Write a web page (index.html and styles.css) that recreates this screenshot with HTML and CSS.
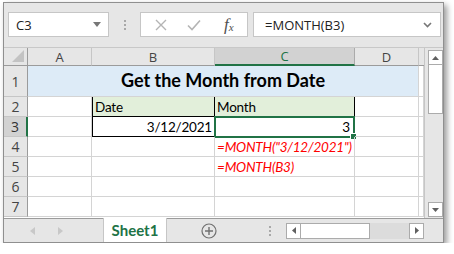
FILE: index.html
```html
<!DOCTYPE html>
<html lang="en">
<head>
    <meta charset="UTF-8">
    <title>Get the Month from Date</title>
    <link rel="stylesheet" href="styles.css">
</head>
<body>
    <div class="window">
        <!-- Formula bar -->
        <div class="formula-bar">
            <div class="name-box">
                <span>C3</span>
                <svg class="caret" width="8" height="5" viewBox="0 0 8 5"><path d="M0 0H8L4 5Z" fill="#777"/></svg>
            </div>
            <div class="grip"><i></i><i></i><i></i></div>
            <div class="fx-box">
                <svg width="12" height="12" viewBox="0 0 12 12"><path d="M1 1L11 11M11 1L1 11" stroke="#b4b4b4" stroke-width="1.4"/></svg>
                <svg width="14" height="12" viewBox="0 0 14 12"><path d="M1 6.5L5 10.5L13 1.5" stroke="#b4b4b4" stroke-width="1.6" fill="none"/></svg>
                <span class="fx">f<sub>x</sub></span>
            </div>
            <div class="formula-input">
                <span>=MONTH(B3)</span>
                <svg width="9" height="6" viewBox="0 0 9 6"><path d="M1 1L4.5 4.5L8 1" stroke="#777" stroke-width="1.6" fill="none"/></svg>
            </div>
        </div>

        <!-- Sheet -->
        <div class="sheet">
            <div class="grid">
                <div class="hd corner"></div>
                <div class="hd col">A</div>
                <div class="hd col">B</div>
                <div class="hd col active">C</div>
                <div class="hd col">D</div>
                <div class="hd col blank"></div>

                <div class="hd row">1</div>
                <div class="cell title">Get the Month from Date</div>
                <div class="cell"></div>

                <div class="hd row">2</div>
                <div class="cell"></div>
                <div class="cell head b-left">Date</div>
                <div class="cell head">Month</div>
                <div class="cell"></div>
                <div class="cell"></div>

                <div class="hd row active">3</div>
                <div class="cell"></div>
                <div class="cell num b-left b-bottom">3/12/2021</div>
                <div class="cell num b-bottom selected">3<span class="handle"></span></div>
                <div class="cell"></div>
                <div class="cell"></div>

                <div class="hd row">4</div>
                <div class="cell"></div>
                <div class="cell"></div>
                <div class="cell formula">=MONTH("3/12/2021")</div>
                <div class="cell"></div>
                <div class="cell"></div>

                <div class="hd row">5</div>
                <div class="cell"></div>
                <div class="cell"></div>
                <div class="cell formula">=MONTH(B3)</div>
                <div class="cell"></div>
                <div class="cell"></div>

                <div class="hd row">6</div>
                <div class="cell"></div>
                <div class="cell"></div>
                <div class="cell"></div>
                <div class="cell"></div>
                <div class="cell"></div>

                <div class="hd row">7</div>
                <div class="cell"></div>
                <div class="cell"></div>
                <div class="cell"></div>
                <div class="cell"></div>
                <div class="cell"></div>
            </div>

            <div class="vscroll">
                <div class="sb-btn"><svg width="7" height="4" viewBox="0 0 7 4"><path d="M0 4H7L3.5 0Z" fill="#606060"/></svg></div>
                <div class="v-thumb"></div>
                <div class="v-track"></div>
                <div class="sb-btn"><svg width="7" height="4" viewBox="0 0 7 4"><path d="M0 0H7L3.5 4Z" fill="#606060"/></svg></div>
            </div>
        </div>

        <!-- Sheet tabs -->
        <div class="tabbar">
            <div class="tab-nav">
                <svg width="5" height="8" viewBox="0 0 5 8"><path d="M5 0V8L0 4Z" fill="#c8c8c8"/></svg>
                <svg width="5" height="8" viewBox="0 0 5 8"><path d="M0 0V8L5 4Z" fill="#c8c8c8"/></svg>
            </div>
            <div class="tab">Sheet1</div>
            <div class="add-sheet">
                <svg width="16" height="16" viewBox="0 0 16 16"><circle cx="8" cy="8" r="7" fill="none" stroke="#707070" stroke-width="1.2"/><path d="M8 4V12M4 8H12" stroke="#707070" stroke-width="1.4"/></svg>
            </div>
            <div class="grip h-grip"><i></i><i></i><i></i></div>
            <div class="hscroll">
                <div class="sb-btn h"><svg width="4" height="7" viewBox="0 0 4 7"><path d="M4 0V7L0 3.5Z" fill="#606060"/></svg></div>
                <div class="h-thumb"></div>
                <div class="h-track"></div>
                <div class="sb-btn h"><svg width="4" height="7" viewBox="0 0 4 7"><path d="M0 0V7L4 3.5Z" fill="#606060"/></svg></div>
            </div>
        </div>
    </div>
</body>
</html>
```

FILE: styles.css
```css
body, html {
    margin: 0;
    padding: 0;
    background: #fff;
}

.window {
    margin: 2px 0 0 3px;
    width: 441px;
    height: 241px;
    box-sizing: border-box;
    border: 1px solid #8f8f8f;
    background: #e6e6e6;
    box-shadow: 3px 3px 6px rgba(0, 0, 0, 0.4);
    display: flex;
    flex-direction: column;
    font-family: "Open Sans", "Noto Sans", sans-serif;
}

/* ---------- formula bar ---------- */
.formula-bar {
    height: 45px;
    flex: none;
    display: flex;
    align-items: flex-start;
    padding: 9px 2px 0 4px;
    box-sizing: border-box;
    border-bottom: 1px solid #c8c8c8;
}

.name-box, .fx-box, .formula-input {
    height: 25px;
    box-sizing: border-box;
    background: #fff;
    border: 1px solid #c6c6c6;
    display: flex;
    align-items: center;
}

.name-box {
    width: 101px;
    padding: 0 7px 0 7px;
    justify-content: space-between;
    font-size: 13px;
    color: #222;
}

.grip {
    width: 31px;
    height: 25px;
    display: flex;
    flex-direction: column;
    align-items: center;
    justify-content: center;
    gap: 2px;
}

.grip i {
    width: 2px;
    height: 2px;
    background: #a8a8a8;
}

.fx-box {
    width: 108px;
    padding: 0 0 0 14px;
    gap: 20px;
}

.fx {
    font-family: "Liberation Serif", serif;
    font-style: italic;
    font-size: 17px;
    color: #505050;
    margin-left: 3px;
    line-height: 1;
}

.fx sub {
    font-size: 11px;
    vertical-align: -1px;
}

.formula-input {
    margin-left: 5px;
    width: 188px;
    padding: 0 8px 0 11px;
    justify-content: space-between;
    font-size: 13px;
    color: #222;
}

/* ---------- sheet ---------- */
.sheet {
    height: 170px;
    flex: none;
    display: flex;
    background: #fff;
}

.grid {
    display: grid;
    grid-template-columns: 24px 64px 123px 140px 64px 5px;
    grid-template-rows: 18px 31px repeat(6, 20px);
}

.hd {
    background: #e6e6e6;
    color: #444;
    font-size: 13px;
    display: flex;
    align-items: center;
    justify-content: center;
    box-sizing: border-box;
}

.hd.col {
    border-right: 1px solid #c6c6c6;
    border-bottom: 1px solid #9b9b9b;
}

.hd.col.blank {
    border-right: none;
}

.hd.row {
    border-right: 1px solid #9b9b9b;
    border-bottom: 1px solid #c6c6c6;
    font-size: 14px;
}

.hd.corner {
    border-right: 1px solid #9b9b9b;
    border-bottom: 1px solid #9b9b9b;
    position: relative;
}

.hd.corner::after {
    content: "";
    position: absolute;
    right: 3px;
    bottom: 3px;
    border-left: 12px solid transparent;
    border-bottom: 12px solid #c3c3c3;
}

.hd.active {
    background: #d2d2d2;
    color: #217346;
}

.hd.col.active {
    border-bottom: 2px solid #217346;
    border-right-color: #ababab;
}

.hd.row.active {
    border-right: 2px solid #217346;
    color: #333;
}

.cell {
    box-sizing: border-box;
    border-right: 1px solid #d4d4d4;
    border-bottom: 1px solid #d4d4d4;
    font-family: "Lato", "Liberation Sans", sans-serif;
    font-size: 13.5px;
    letter-spacing: -0.2px;
    color: #000;
    padding: 0 2px;
    display: flex;
    align-items: center;
    white-space: nowrap;
    position: relative;
}

.cell.title {
    grid-column: 2 / 6;
    background: #ddebf7;
    justify-content: center;
    font-weight: bold;
    font-size: 18px;
    letter-spacing: 0;
    padding-bottom: 2px;
}

.cell.head {
    background: #e2efda;
    border-right: 1px solid #000;
    border-bottom: 1px solid #000;
}

.cell.b-left {
    border-left: 1px solid #000;
}

.cell.num {
    justify-content: flex-end;
    border-right: 1px solid #000;
}

.cell.b-bottom {
    border-bottom: 1px solid #000;
}

.cell.selected {
    border: 2px solid #217346;
    margin: -1px 0 -1px -1px;
    padding-right: 3px;
}

.handle {
    position: absolute;
    right: -4px;
    bottom: -4px;
    width: 5px;
    height: 5px;
    background: #217346;
    border: 1px solid #fff;
}

.cell.formula {
    color: #ff0000;
    font-style: italic;
    overflow: visible;
}

/* ---------- scroll bars ---------- */
.vscroll {
    flex: 1;
    background: #e6e6e6;
    border-left: 1px solid #c6c6c6;
    display: flex;
    flex-direction: column;
    padding: 2px 0 1px 3px;
}

.sb-btn {
    width: 15px;
    height: 15px;
    box-sizing: border-box;
    background: #fff;
    border: 1px solid #ababab;
    display: flex;
    align-items: center;
    justify-content: center;
    flex: none;
}

.v-thumb {
    width: 15px;
    height: 49px;
    box-sizing: border-box;
    background: #fff;
    border: 1px solid #ababab;
    border-top: none;
}

.v-track {
    flex: 1;
}

.tabbar {
    flex: 1;
    display: flex;
    align-items: stretch;
    border-top: 1px solid #9b9b9b;
}

.tab-nav {
    width: 99px;
    flex: none;
    display: flex;
    align-items: center;
    padding-left: 26px;
    gap: 23px;
    box-sizing: border-box;
}

.tab {
    width: 64px;
    flex: none;
    box-sizing: border-box;
    margin-top: -1px;
    background: #fff;
    color: #217346;
    font-family: "Lato", "Liberation Sans", sans-serif;
    font-weight: bold;
    font-size: 15px;
    display: flex;
    align-items: center;
    justify-content: center;
    border-left: 1px solid #c6c6c6;
    border-right: 1px solid #c6c6c6;
    padding-bottom: 1px;
}

.add-sheet {
    width: 84px;
    flex: none;
    display: flex;
    align-items: center;
    justify-content: center;
}

.h-grip {
    width: 8px;
    height: auto;
    flex: none;
    margin-left: 15px;
}

.hscroll {
    margin-left: 12px;
    width: 138px;
    flex: none;
    display: flex;
    align-items: center;
    background: #dcdcdc;
    height: 16px;
    align-self: center;
}

.sb-btn.h {
    width: 15px;
    height: 16px;
}

.h-thumb {
    width: 69px;
    height: 16px;
    box-sizing: border-box;
    background: #fff;
    border: 1px solid #ababab;
    border-left: none;
}

.h-track {
    flex: 1;
}
```
